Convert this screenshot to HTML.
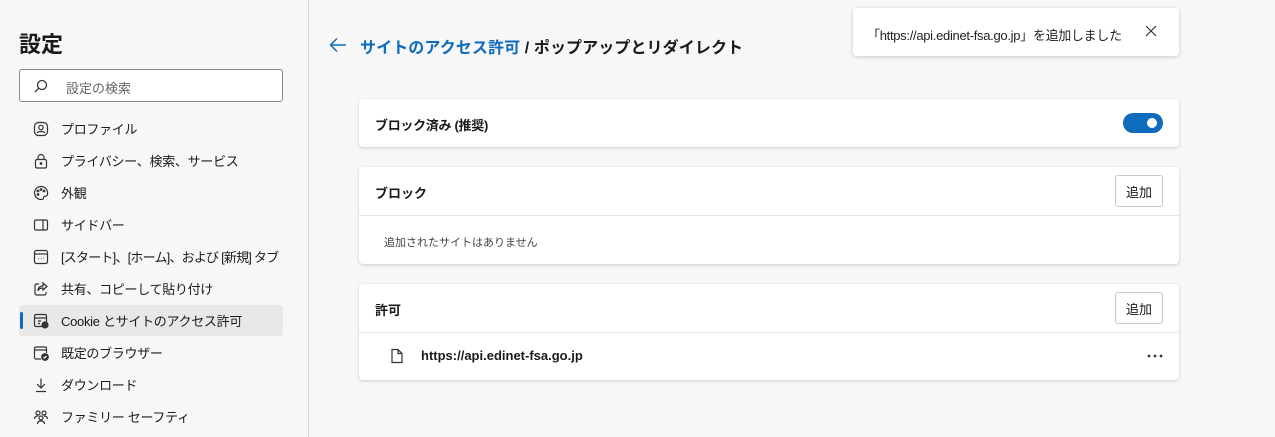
<!DOCTYPE html><html><head><meta charset="utf-8"><style>
*{box-sizing:border-box;margin:0;padding:0}
body{width:1275px;height:437px;background:#f7f7f7;font-family:"Liberation Sans","Noto Sans CJK JP",sans-serif;color:#1a1a1a;position:relative;overflow:hidden;font-size:13px}
.abs{position:absolute;white-space:nowrap}
.side{position:absolute;left:0;top:0;width:309px;height:437px;border-right:1px solid #d6d6d6}
.item{position:absolute;left:19px;width:264px;height:31px;font-size:13px;white-space:nowrap}
.item svg{position:absolute;left:14px;top:8px}
.item span{position:absolute;left:42px;top:6px;letter-spacing:-0.3px}
.card{position:absolute;left:359px;width:820px;background:#fff;border-radius:4px;box-shadow:0 1px 3px rgba(0,0,0,.18)}
.btn{position:absolute;right:16px;width:48px;height:32px;border:1px solid #c8c8c8;border-radius:3px;font-size:13px;display:flex;align-items:center;justify-content:center;background:#fff}
</style></head><body>
<div class="side">
<div class="abs" style="left:19px;top:27px;font-size:22px;font-weight:bold">設定</div>
<div class="abs" style="left:19px;top:69px;width:264px;height:33px;border:1px solid #8a8a8a;border-radius:3px;background:#fff">
<svg class="abs" style="left:14px;top:9px" width="14" height="14" viewBox="0 0 14 14" fill="none" stroke="#333" stroke-width="1.3"><circle cx="8" cy="6" r="4.5"/><path d="M4.8 9.2L1 13"/></svg>
<span class="abs" style="left:46px;top:8px;color:#666;font-size:13px">設定の検索</span></div>
<div class="item" style="top:113px"><svg width="16" height="16" viewBox="0 0 16 16" fill="none" stroke="#333" stroke-width="1.2"><rect x="1.5" y="1.5" width="13" height="13" rx="4"/><circle cx="8" cy="6.5" r="2.2"/><path d="M4 12c1-2 7-2 8 0"/></svg><span>プロファイル</span></div>
<div class="item" style="top:145px"><svg width="16" height="16" viewBox="0 0 16 16" fill="none" stroke="#333" stroke-width="1.2"><rect x="2.5" y="6.5" width="11" height="8.5" rx="1.5"/><path d="M5 6.5V4.5a3 3 0 0 1 6 0v2"/><circle cx="8" cy="10.5" r=".8" fill="#333"/></svg><span>プライバシー、検索、サービス</span></div>
<div class="item" style="top:177px"><svg width="16" height="16" viewBox="0 0 16 16" fill="none" stroke="#333" stroke-width="1.2"><path d="M8 1.5a6.5 6.5 0 1 0 2 12.7c1-.5 0-2 1-2.7 1-.6 3.5.5 3.5-2.5A6.5 6.5 0 0 0 8 1.5z"/><circle cx="5" cy="6" r=".8"/><circle cx="8" cy="4.5" r=".8"/><circle cx="11" cy="6" r=".8"/><circle cx="5" cy="9.5" r=".8"/></svg><span>外観</span></div>
<div class="item" style="top:209px"><svg width="16" height="16" viewBox="0 0 16 16" fill="none" stroke="#333" stroke-width="1.2"><rect x="1.5" y="3" width="13" height="10" rx="1.5"/><path d="M10 3v10"/></svg><span>サイドバー</span></div>
<div class="item" style="top:241px"><svg width="16" height="16" viewBox="0 0 16 16" fill="none" stroke="#333" stroke-width="1.2"><rect x="1.5" y="1.5" width="13" height="13" rx="2"/><path d="M1.5 5h13"/><path d="M5 9.5h.5M7.8 9.5h.5M10.5 9.5h.5" stroke-width="1.5"/></svg><span style="letter-spacing:-0.8px">[スタート]、[ホーム]、および [新規] タブ</span></div>
<div class="item" style="top:273px"><svg width="16" height="16" viewBox="0 0 16 16" fill="none" stroke="#333" stroke-width="1.2"><path d="M6 3H3.5A1.5 1.5 0 0 0 2 4.5v8A1.5 1.5 0 0 0 3.5 14h8a1.5 1.5 0 0 0 1.5-1.5V11"/><path d="M10 2l4 3.5-4 3.5V7c-3 0-4.5 1-5 3 0-3.5 2-5 5-5z"/></svg><span>共有、コピーして貼り付け</span></div>
<div class="item" style="top:305px;background:#e8e8e8;border-radius:3px"><div class="abs" style="left:1px;top:7px;width:3px;height:17px;background:#0f6cbd;border-radius:2px"></div><svg width="16" height="16" viewBox="0 0 16 16" fill="none" stroke="#333" stroke-width="1.2"><rect x="1.5" y="1.5" width="12" height="12" rx="1.5"/><path d="M1.5 5h12M5 8h3M5 10.5h2"/><circle cx="12" cy="12" r="3" fill="#333"/></svg><span>Cookie とサイトのアクセス許可</span></div>
<div class="item" style="top:337px"><svg width="16" height="16" viewBox="0 0 16 16" fill="none" stroke="#333" stroke-width="1.2"><path d="M8 14H3a1.5 1.5 0 0 1-1.5-1.5v-9A1.5 1.5 0 0 1 3 2h9a1.5 1.5 0 0 1 1.5 1.5V8M1.5 5h12"/><circle cx="12" cy="12" r="3.3" fill="#333"/><path d="M10.5 12l1 1 2-2" stroke="#fff"/></svg><span>既定のブラウザー</span></div>
<div class="item" style="top:369px"><svg width="16" height="16" viewBox="0 0 16 16" fill="none" stroke="#333" stroke-width="1.2"><path d="M8 1.5v9M4 7l4 4 4-4M3 14.5h10"/></svg><span>ダウンロード</span></div>
<div class="item" style="top:401px"><svg width="16" height="16" viewBox="0 0 16 16" fill="none" stroke="#333" stroke-width="1.2"><circle cx="5" cy="4" r="2"/><circle cx="11" cy="4" r="2"/><circle cx="8" cy="9" r="2"/><path d="M1.5 10c0-2 1.5-3 3.5-3M14.5 10c0-2-1.5-3-3.5-3M4.5 15c0-2 1.5-3 3.5-3s3.5 1 3.5 3"/></svg><span>ファミリー セーフティ</span></div>
</div>
<svg class="abs" style="left:329px;top:37px" width="18" height="16" viewBox="0 0 18 16" fill="none" stroke="#0f6cbd" stroke-width="1.5"><path d="M17 8H2M8 1.5L1.5 8 8 14.5"/></svg>
<div class="abs" style="left:360px;top:34px;font-size:16px;font-weight:bold;letter-spacing:0.1px"><span style="color:#0f6cbd">サイトのアクセス許可</span> / ポップアップとリダイレクト</div>
<div class="card" style="top:99px;height:48px"><div class="abs" style="left:16px;top:16px;font-weight:bold;font-size:13px;letter-spacing:-0.3px">ブロック済み (推奨)</div>
<div class="abs" style="left:764px;top:14px;width:40px;height:20px;border-radius:10px;background:#0f6cbd"><div class="abs" style="left:24px;top:5px;width:10px;height:10px;border-radius:5px;background:#fff"></div></div></div>
<div class="card" style="top:167px;height:97px"><div class="abs" style="left:16px;top:16px;font-weight:bold">ブロック</div><div class="btn" style="top:8px">追加</div>
<div class="abs" style="left:0;top:48px;width:820px;border-top:1px solid #e5e5e5"></div>
<div class="abs" style="left:25px;top:67px;font-size:11px;color:#444">追加されたサイトはありません</div></div>
<div class="card" style="top:284px;height:96px"><div class="abs" style="left:16px;top:16px;font-weight:bold">許可</div><div class="btn" style="top:8px">追加</div>
<div class="abs" style="left:0;top:48px;width:820px;border-top:1px solid #e5e5e5"></div>
<svg class="abs" style="left:31px;top:64px" width="14" height="16" viewBox="0 0 14 16" fill="none" stroke="#333" stroke-width="1.2"><path d="M2 1.5h6l4 4v9H2z M8 1.5v4h4"/></svg>
<div class="abs" style="left:62px;top:64px;font-weight:bold;font-size:13px">https://api.edinet-fsa.go.jp</div>
<svg class="abs" style="left:788px;top:70px" width="16" height="4" viewBox="0 0 16 4" fill="#333"><circle cx="2" cy="2" r="1.4"/><circle cx="8" cy="2" r="1.4"/><circle cx="14" cy="2" r="1.4"/></svg></div>
<div class="abs" style="left:853px;top:8px;width:326px;height:48px;background:#fff;border-radius:4px;box-shadow:0 1px 4px rgba(0,0,0,.18)">
<div class="abs" style="left:14px;top:17px;font-size:13px;color:#222;letter-spacing:-0.3px">「https://api.edinet-fsa.go.jp」を追加しました</div>
<svg class="abs" style="left:292px;top:17px" width="12" height="12" viewBox="0 0 12 12" stroke="#333" stroke-width="1.2"><path d="M1 1l10 10M11 1L1 11"/></svg></div>
</body></html>
